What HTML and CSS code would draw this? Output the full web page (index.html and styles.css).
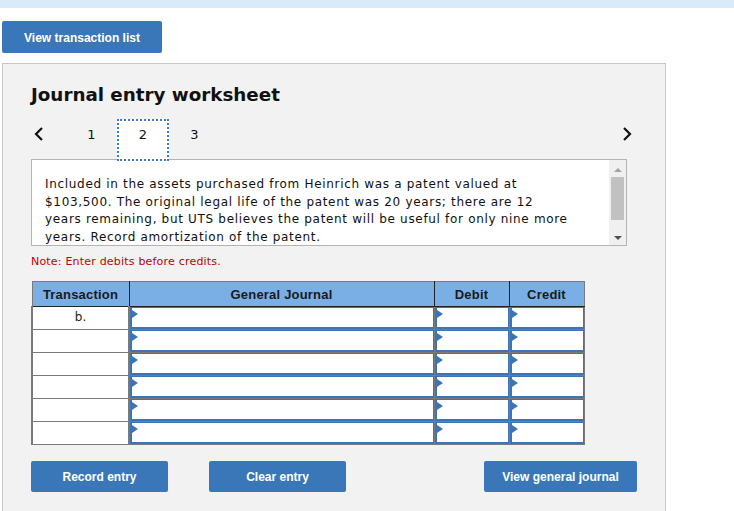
FILE: index.html
```html
<!DOCTYPE html>
<html>
<head>
<meta charset="utf-8">
<link rel="stylesheet" href="styles.css">
</head>
<body>
<div class="topbar"></div>
<button class="btn btn-top">View transaction list</button>
<div class="panel">
  <h1 class="title">Journal entry worksheet</h1>
  <div class="tabs">
    <span class="arrow arrow-left">
      <svg width="10" height="16" viewBox="0 0 10 16"><path d="M8 2 L2 8 L8 14" fill="none" stroke="#111" stroke-width="2.2"/></svg>
    </span>
    <span class="tab">1</span>
    <span class="tab tab-active">2</span>
    <span class="tab">3</span>
    <span class="spacer"></span>
    <span class="arrow arrow-right">
      <svg width="10" height="16" viewBox="0 0 10 16"><path d="M2 2 L8 8 L2 14" fill="none" stroke="#111" stroke-width="2.2"/></svg>
    </span>
  </div>
  <div class="textbox">
    <p class="prompt">Included in the assets purchased from Heinrich was a patent valued at $103,500. The original legal life of the patent was 20 years; there are 12 years remaining, but UTS believes the patent will be useful for only nine more years. Record amortization of the patent.</p>
    <div class="scrollbar">
      <span class="sb-up"></span>
      <span class="sb-thumb"></span>
      <span class="sb-down"></span>
    </div>
  </div>
  <p class="note">Note: Enter debits before credits.</p>
  <table class="journal">
    <thead>
      <tr>
        <th class="c-tr">Transaction</th>
        <th class="c-gj">General Journal</th>
        <th class="c-dr">Debit</th>
        <th class="c-cr">Credit</th>
      </tr>
    </thead>
    <tbody>
      <tr><td class="tr">b.</td><td class="in"><div class="box"></div></td><td class="in"><div class="box"></div></td><td class="in"><div class="box"></div></td></tr>
      <tr><td class="tr"></td><td class="in"><div class="box"></div></td><td class="in"><div class="box"></div></td><td class="in"><div class="box"></div></td></tr>
      <tr><td class="tr"></td><td class="in"><div class="box"></div></td><td class="in"><div class="box"></div></td><td class="in"><div class="box"></div></td></tr>
      <tr><td class="tr"></td><td class="in"><div class="box"></div></td><td class="in"><div class="box"></div></td><td class="in"><div class="box"></div></td></tr>
      <tr><td class="tr"></td><td class="in"><div class="box"></div></td><td class="in"><div class="box"></div></td><td class="in"><div class="box"></div></td></tr>
      <tr><td class="tr"></td><td class="in"><div class="box"></div></td><td class="in"><div class="box"></div></td><td class="in"><div class="box"></div></td></tr>
    </tbody>
  </table>
  <div class="actions">
    <button class="btn btn-record">Record entry</button>
    <button class="btn btn-clear">Clear entry</button>
    <span class="spacer"></span>
    <button class="btn btn-view">View general journal</button>
  </div>
</div>
</body>
</html>
```
FILE: styles.css
```css
* { box-sizing: border-box; }
html, body { margin: 0; padding: 0; background: #fff; }
body { font-family: "DejaVu Sans", Verdana, sans-serif; color: #111; width: 734px; height: 511px; overflow: hidden; }

.topbar { height: 8px; background: #dbeaf8; }

.btn {
  font-family: "Liberation Sans", Arial, sans-serif;
  font-weight: bold;
  font-size: 12px;
  color: #fff;
  background: #3a77b9;
  border: none;
  border-radius: 2px;
  padding: 0;
  cursor: pointer;
}
.btn-top { display: block; margin: 13px 0 0 2px; width: 160px; height: 32px; padding-top: 1px; }

.panel {
  margin: 10px 0 0 2px;
  width: 664px;
  height: 460px;
  background: #f2f2f2;
  border: 1px solid #c8c8c8;
  border-bottom: none;
  padding: 0 0 0 28px;
}

.title {
  margin: 19px 0 0 0;
  font-size: 18.3px;
  font-weight: bold;
  line-height: 24px;
  color: #111;
}

.tabs {
  display: flex;
  align-items: flex-start;
  height: 42px;
  margin-top: 12px;
  margin-right: 33px;
  position: relative;
  z-index: 2;
}
.arrow { display: flex; align-items: center; padding-top: 7px; }
.arrow-left { width: 35px; padding-left: 3px; }
.tab {
  width: 51px;
  height: 42px;
  text-align: center;
  padding-top: 8px;
  font-size: 13px;
  line-height: 16px;
  color: #111;
}
.tab-active {
  width: 52px;
  background: #fff;
  border: 2px dotted #3d7cc9;
  padding-top: 6px;
}
.spacer { flex: 1; }

.textbox {
  display: flex;
  width: 596px;
  height: 87px;
  margin-top: -2px;
  background: #fff;
  border: 1px solid #b4b4b4;
  overflow: hidden;
  position: relative;
  z-index: 1;
}
.prompt {
  flex: 1;
  margin: 0;
  padding: 16px 38px 0 13px;
  font-size: 12px;
  line-height: 17.5px;
  letter-spacing: 0.68px;
  color: #111;
}
.scrollbar {
  width: 17px;
  background: #f0f0f0;
  display: flex;
  flex-direction: column;
  align-items: center;
  padding: 0 2px;
}
.sb-up {
  margin-top: 8px;
  width: 0; height: 0;
  border-left: 4px solid transparent;
  border-right: 4px solid transparent;
  border-bottom: 4px solid #a3a3a3;
}
.sb-thumb {
  margin-top: 5px;
  width: 13px;
  height: 43px;
  background: #c1c1c1;
}
.sb-down {
  margin-top: 16px;
  width: 0; height: 0;
  border-left: 4px solid transparent;
  border-right: 4px solid transparent;
  border-top: 4px solid #505050;
}

.note {
  margin: 9px 0 0 0;
  font-size: 11px;
  color: #c00000;
  line-height: 13px;
  letter-spacing: 0.2px;
}

.journal {
  margin-top: 13px;
  border-collapse: collapse;
  width: 552px;
  table-layout: fixed;
}
.journal th {
  background: #7aafe6;
  font-family: "Liberation Sans", Arial, sans-serif;
  font-weight: bold;
  font-size: 13px;
  color: #1a1a1a;
  height: 25px;
  padding: 0;
  border: 1px solid #222;
  border-top-color: #7a7a7a;
  letter-spacing: 0.2px;
}
.journal th:first-child { border-left-color: #7a7a7a; }
.journal th:last-child { border-right-color: #7a7a7a; }
.c-tr { width: 97px; }
.c-gj { width: 305px; }
.c-dr { width: 75px; }
.c-cr { width: 75px; }
.journal td {
  height: 23px;
  padding: 0;
  border: 2px solid #7a7a7a;
  background: #fff;
}
.journal td.tr {
  border-width: 1px 2px 1px 2px;
  font-size: 12px;
  text-align: center;
  vertical-align: top;
  padding-top: 3px;
  color: #222;
}
.journal td.in { border-width: 1px 1px 1px 1px; }
.box {
  position: relative;
  height: 22px;
  border: 1px solid #3d74b5;
  border-left-width: 2px;
  border-bottom-width: 2px;
  background: #fff;
}
.box::before {
  content: "";
  position: absolute;
  left: 0; top: 2px;
  width: 0; height: 0;
  border-top: 4px solid transparent;
  border-bottom: 4px solid transparent;
  border-left: 6px solid #3d74b5;
}

.actions {
  display: flex;
  margin-top: 16px;
  width: 606px;
}
.btn-record, .btn-clear { width: 137px; height: 31px; }
.btn-clear { margin-left: 41px; }
.btn-view { width: 153px; height: 31px; }
```
